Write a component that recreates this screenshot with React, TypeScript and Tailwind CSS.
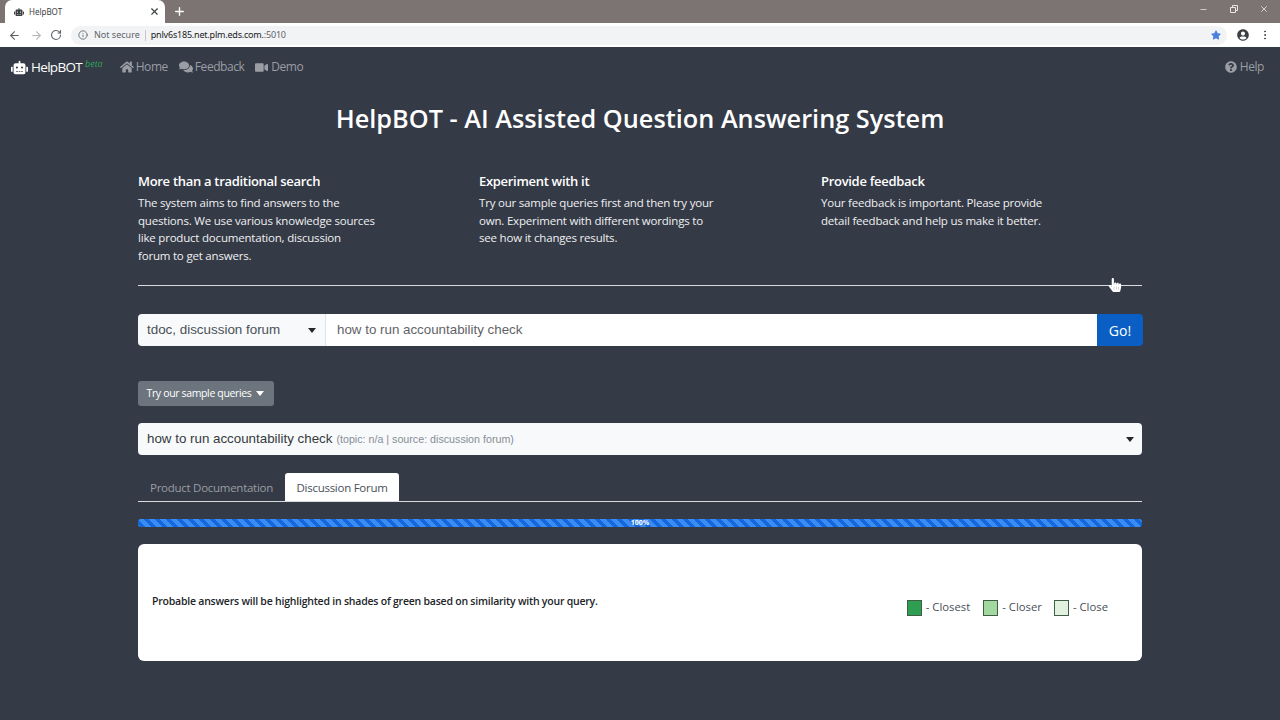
import { FaRobot, FaHome, FaComments, FaVideo, FaQuestionCircle, FaStar, FaUserCircle, FaHandPointer } from "react-icons/fa";
import { ArrowLeft, ArrowRight, RotateCw, Info, X, Plus, Minus, EllipsisVertical } from "lucide-react";

const columns = [
  {
    title: "More than a traditional search",
    lines: ["The system aims to find answers to the", "questions. We use various knowledge sources", "like product documentation, discussion", "forum to get answers."],
  },
  {
    title: "Experiment with it",
    lines: ["Try our sample queries first and then try your", "own. Experiment with different wordings to", "see how it changes results."],
  },
  {
    title: "Provide feedback",
    lines: ["Your feedback is important. Please provide", "detail feedback and help us make it better."],
  },
];

const legend = [
  { label: "- Closest", color: "bg-[#2f9e52]", mr: "mr-[13px]" },
  { label: "- Closer", color: "bg-[#a3d9a0]", mr: "mr-[12px]" },
  { label: "- Close", color: "bg-[#e3f2e0]", mr: "" },
];

function Caret({ className }: { className: string }) {
  return <span className={`inline-block border-x-[4px] border-t-[5px] border-x-transparent ${className}`} />;
}

function ChromeBar() {
  return (
    <div className="font-['Noto_Sans',sans-serif]">
      <div className="h-[23px] bg-[#7b7472] flex items-end pl-[5px]">
        <div className="w-[160px] h-[23px] bg-white rounded-t-[7px] flex items-center pl-[9px] pr-[5px] text-[#3c4043] text-[8px]">
          <FaRobot className="text-[10px] mr-[5px]" />
          <span>HelpBOT</span>
          <X className="ml-auto w-[11px] h-[11px]" strokeWidth={2.5} />
        </div>
        <Plus className="ml-[8px] mb-[5px] w-[13px] h-[13px] text-white" strokeWidth={2.5} />
        <div className="ml-auto self-start flex items-center h-[18px] text-[#e8e6e5]">
          <Minus className="w-[9px] h-[9px] mr-[22px]" />
          <svg viewBox="0 0 8 8" className="w-[8px] h-[8px] mr-[21px]" fill="none" stroke="currentColor">
            <path d="M0.5 2.5h5v5h-5z" />
            <path d="M2.5 2.5v-2h5v5h-2" />
          </svg>
          <X className="w-[10px] h-[10px] mr-[11px]" />
        </div>
      </div>
      <div className="h-[24px] bg-white flex items-center text-[#5f6368]">
        <ArrowLeft className="w-[13px] h-[13px] ml-[8px]" strokeWidth={2} />
        <ArrowRight className="w-[13px] h-[13px] ml-[9px] text-[#b5b7ba]" strokeWidth={2} />
        <RotateCw className="w-[12px] h-[12px] ml-[7px]" strokeWidth={2.2} />
        <div className="ml-[9px] h-[19px] w-[1156px] bg-[#f1f3f4] rounded-full flex items-center pl-[7px] pr-[6px] text-[9px]">
          <Info className="w-[10px] h-[10px]" />
          <span className="ml-[6px]">Not secure</span>
          <span className="mx-[5px] w-px h-[11px] bg-[#c5c7ca]" />
          <span className="text-[#202124] tracking-[-0.2px]">pnlv6s185.net.plm.eds.com.</span>
          <span className="tracking-[-0.2px]">:5010</span>
          <FaStar className="ml-auto w-[10px] h-[10px] text-[#4a7fe0]" />
        </div>
        <FaUserCircle className="ml-[10px] w-[12px] h-[12px] text-[#3c4043]" />
        <EllipsisVertical className="ml-[10px] w-[12px] h-[12px] text-[#3c4043]" />
      </div>
    </div>
  );
}

export default function App() {
  return (
    <div className="w-[1280px] h-[720px] overflow-hidden bg-[#343a46] font-['Open_Sans',sans-serif]">
      <ChromeBar />

      <nav className="h-[40px] flex items-center pl-[11px] pr-[16px] text-[12px] tracking-[-0.45px] text-[#9a9da3]">
        <FaRobot className="text-white text-[17px] mr-[3px]" />
        <span className="text-white text-[13.5px] tracking-[-0.7px]">HelpBOT</span>
        <i className="text-[#2fa35a] text-[9px] tracking-normal ml-[3px] -mt-[7px]">beta</i>
        <FaHome className="ml-[17px] mr-[2px] text-[14px]" />
        <span>Home</span>
        <FaComments className="ml-[11px] mr-[2px] text-[14px]" />
        <span>Feedback</span>
        <FaVideo className="ml-[11px] mr-[3px] text-[13px]" />
        <span>Demo</span>
        <FaQuestionCircle className="ml-auto mr-[3px] text-[12px]" />
        <span>Help</span>
      </nav>

      <h1 className="mt-[13px] text-center text-white text-[25.3px] leading-[36px] font-semibold">
        HelpBOT - AI Assisted Question Answering System
      </h1>

      <main className="mx-[138px] w-[1004px]">
        <div className="mt-[36px] grid grid-cols-[341px_342px_1fr] h-[100px]">
          {columns.map((col) => (
            <div key={col.title}>
              <h2 className="text-white text-[13px] tracking-[-0.3px] font-semibold leading-[19px] mb-[3px]">{col.title}</h2>
              {col.lines.map((line) => (
                <p key={line} className="text-[#f0f0f2] text-[11.5px] tracking-[-0.2px] leading-[17.5px]">{line}</p>
              ))}
            </div>
          ))}
        </div>

        <div className="relative mt-[13px] h-px bg-[#d8dadd]">
          <FaHandPointer className="absolute left-[970px] -top-[7px] text-[14px] text-white" />
        </div>

        <div className="mt-[28px] -mr-px flex h-[32px] font-['Liberation_Sans',sans-serif]">
          <div className="w-[188px] bg-[#f8f9fa] rounded-l-[4px] flex items-center pl-[9px] pr-[9px] border-r border-[#dfe3e8] text-[13.4px] text-[#495057]">
            <span>tdoc, discussion forum</span>
            <Caret className="ml-auto border-t-[#23272b]" />
          </div>
          <div className="flex-1 bg-white flex items-center pl-[11px] text-[13.35px] text-[#5f6368]">how to run accountability check</div>
          <button className="w-[46px] bg-[#0b5fc4] rounded-r-[4px] text-white text-[14px] font-['Open_Sans',sans-serif]">Go!</button>
        </div>

        <button className="mt-[35px] h-[25px] w-[136px] bg-[#6c757d] rounded-[3px] flex items-center justify-center pr-[2px] text-white text-[10.5px] tracking-[-0.35px]">
          Try our sample queries
          <Caret className="ml-[4px] border-t-white" />
        </button>

        <div className="mt-[17px] h-[32px] bg-[#f8f9fa] rounded-[4px] flex items-center pl-[9px] pr-[8px] font-['Liberation_Sans',sans-serif] text-[13.35px] text-[#343a40]">
          <span>how to run accountability check</span>
          <span className="ml-[4px] text-[10.7px] text-[#868e96]">(topic: n/a | source: discussion forum)</span>
          <Caret className="ml-auto border-t-[#23272b]" />
        </div>

        <div className="mt-[18px] h-[29px] border-b border-[#d8dadd] flex items-end pl-px text-[11.5px] tracking-[-0.27px]">
          <div className="h-[28px] pt-px px-[11px] mr-px flex items-center text-[#9a9da3]">Product Documentation</div>
          <div className="h-[28px] pt-px px-[11.5px] flex items-center bg-white rounded-t-[3px] text-[#495057]">Discussion Forum</div>
        </div>

        <div className="relative mt-[17px] h-[8px] rounded-[3px] bg-[#1467dc] bg-[linear-gradient(45deg,#3b8cf2_25%,transparent_25%,transparent_50%,#3b8cf2_50%,#3b8cf2_75%,transparent_75%)] bg-[length:11px_11px] flex items-center justify-center text-white text-[7px] font-bold">
          100%
        </div>

        <div className="mt-[17px] h-[117px] bg-white rounded-[6px] flex items-center pl-[14px] pr-[34px]">
          <p className="text-[10.5px] tracking-[-0.22px] font-semibold text-[#212529] -mt-[1px]">
            Probable answers will be highlighted in shades of green based on similarity with your query.
          </p>
          <div className="ml-auto flex items-center mt-[10px] text-[11.3px] text-[#495057]">
            {legend.map((item) => (
              <div key={item.label} className={`flex items-center ${item.mr}`}>
                <span className={`w-[15px] h-[16px] border border-[#3f5f45] mr-[4px] ${item.color}`} />
                {item.label}
              </div>
            ))}
          </div>
        </div>
      </main>
    </div>
  );
}
